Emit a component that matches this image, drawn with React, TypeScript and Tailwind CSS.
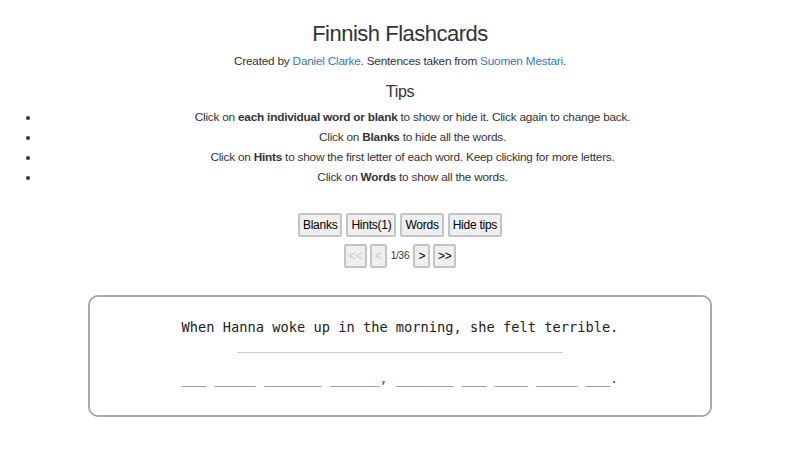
export default function App() {
  const blanks = "___ _____ _______ ______, _______ ___ ____ _____ ___."

  const btn =
    "bg-[#efefef] border-2 border-[#c4c4c4] rounded-[2px] px-[3px] h-[24px] text-[12px] tracking-[-0.25px] leading-none text-black"
  const navBtn =
    "bg-[#efefef] border-2 border-[#c4c4c4] rounded-[2px] h-[24px] text-[12px] leading-none"

  return (
    <div className="w-[800px] h-[450px] bg-white text-[#333] font-['Liberation_Sans',Arial,sans-serif] text-[11.8px] tracking-[-0.22px] leading-[20px]">
      <div className="pt-[21px] text-center">
        <h1 className="text-[22px] tracking-[-0.5px] leading-[26px] mb-[4px]">Finnish Flashcards</h1>
        <p>
          Created by <a className="text-[#337ab7]">Daniel Clarke</a>. Sentences taken from{" "}
          <a className="text-[#337ab7]">Suomen Mestari</a>.
        </p>
      </div>

      <h3 className="text-center text-[16px] tracking-[-0.3px] leading-[20px] mt-[11px] mb-[5px]">Tips</h3>
      <ul className="list-disc pl-[40px] pr-[15px] text-center">
        <li>
          Click on <b>each individual word or blank</b> to show or hide it. Click again to change back.
        </li>
        <li>
          Click on <b>Blanks</b> to hide all the words.
        </li>
        <li>
          Click on <b>Hints</b> to show the first letter of each word. Keep clicking for more letters.
        </li>
        <li>
          Click on <b>Words</b> to show all the words.
        </li>
      </ul>

      <div className="mt-[26px] flex flex-col items-center gap-[7px]">
        <div className="flex gap-[4px]">
          <button className={btn}>Blanks</button>
          <button className={btn}>Hints(1)</button>
          <button className={btn}>Words</button>
          <button className={btn}>Hide tips</button>
        </div>
        <div className="flex items-center gap-[3px]">
          <button className={navBtn + " w-[23px] text-[#c8c8c8]"}>&lt;&lt;</button>
          <button className={navBtn + " w-[17px] text-[#c8c8c8]"}>&lt;</button>
          <span className="text-[10px] px-[1px]">1/36</span>
          <button className={navBtn + " w-[17px] text-black"}>&gt;</button>
          <button className={navBtn + " w-[23px] text-black"}>&gt;&gt;</button>
        </div>
      </div>

      <div className="mt-[27px] mx-auto w-[624px] h-[122px] border-2 border-[#aaa] rounded-[10px] flex flex-col items-center pt-[20px] font-['DejaVu_Sans_Mono',monospace] text-[13.7px] tracking-normal text-[#222]">
        <div className="leading-[20px] whitespace-pre">When Hanna woke up in the morning, she felt terrible.</div>
        <div className="w-[326px] h-px bg-[#ccc] mt-[15px] mb-[15px]" />
        <div className="leading-[20px] whitespace-pre text-[#555]">{blanks}</div>
      </div>
    </div>
  )
}
